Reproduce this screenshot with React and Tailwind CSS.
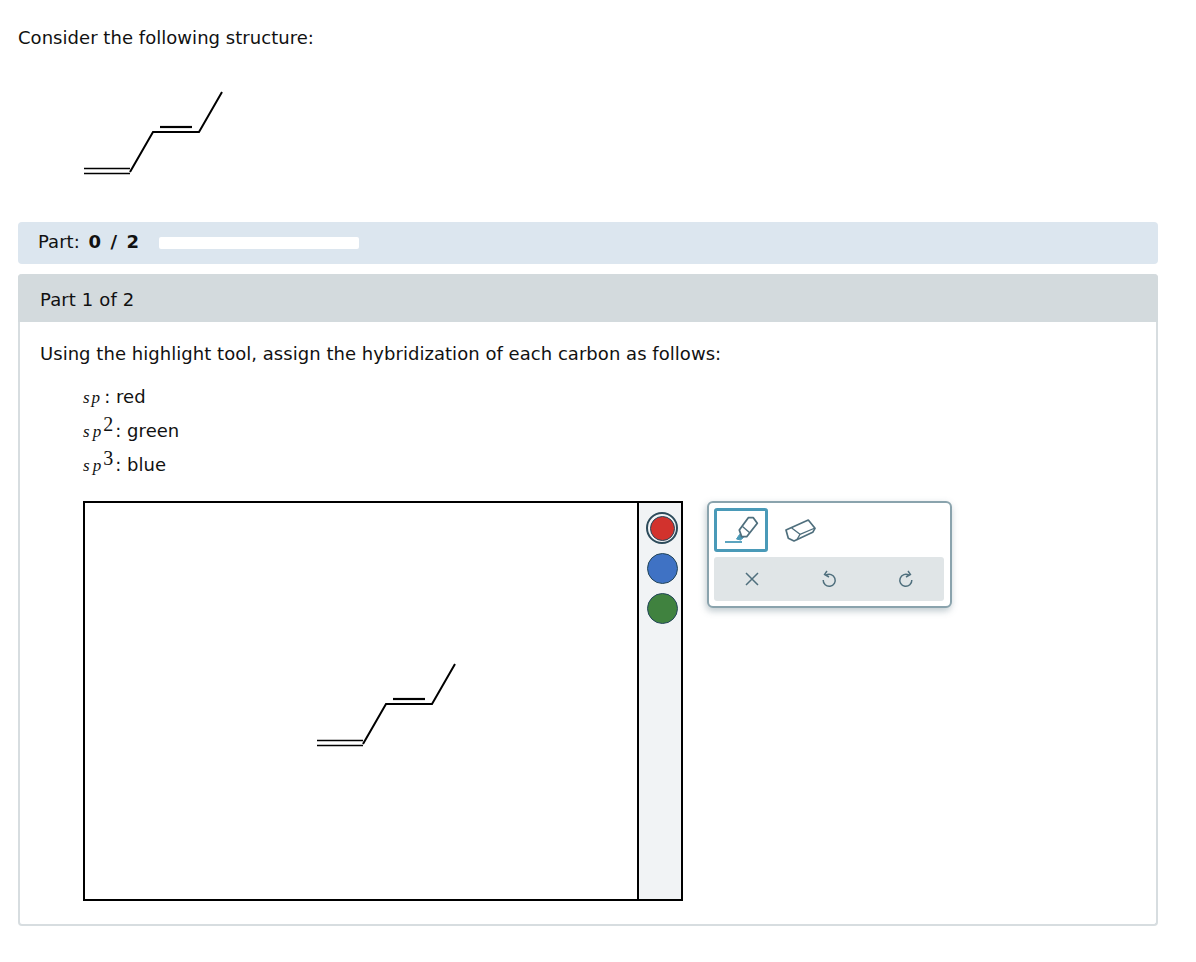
import React from 'react';

const Molecule = ({ className = '' }) => (
  <svg className={className} width="140" height="84" viewBox="0 0 140 84" fill="none" stroke="#000">
    <path d="M0 77.5H46M0 82.5H46" strokeWidth="1.7" />
    <path d="M46 81L69 41H115L138 1" strokeWidth="2" />
    <path d="M76 36H108" strokeWidth="2.2" />
  </svg>
);

const Swatch = ({ color, selected }) => (
  <div className={`w-[32px] h-[32px] rounded-full flex items-center justify-center ${selected ? 'border-2 border-[#2c4a5a]' : ''}`}>
    <div className={`rounded-full border border-[#24465a] ${selected ? 'w-[25px] h-[25px]' : 'w-[31px] h-[31px]'} ${color}`} />
  </div>
);

const Sp = ({ exp }) => (
  <span className="inline-flex items-baseline" style={{ fontFamily: '"Liberation Serif", serif' }}>
    {exp ? (
      <>
        <i className="text-[17px] mr-[3px]">s</i>
        <i className="text-[17px]">p</i>
        <span className="text-[20px] relative -top-[6px] ml-[2px] mr-[2px]">{exp}</span>
      </>
    ) : (
      <i className="text-[17px] tracking-[2px] mr-[2px]">sp</i>
    )}
  </span>
);

export default function App() {
  return (
    <div className="w-[1196px] h-[962px] bg-white text-[#111] px-[18px] pt-[26px] text-[18px] leading-[24px] tracking-[0.04px]" style={{ fontFamily: '"DejaVu Sans", sans-serif' }}>
      <p>Consider the following structure:</p>

      <div className="pl-[66px] pt-[41px] h-[172px]">
        <Molecule />
      </div>

      <div className="w-[1140px] h-[42px] bg-[#dce6ef] rounded-[4px] flex items-center px-[20px]">
        <span className="w-[121px] pb-[2px]">Part: <b className="ml-[3px] tracking-[1.6px]">0 / 2</b></span>
        <div className="w-[200px] h-[12px] bg-white rounded-[2px]" />
      </div>

      <div className="w-[1140px] h-[652px] mt-[10px] border-2 border-t-0 border-[#d7dde0] rounded-[4px]">
        <div className="h-[48px] -mx-[2px] pt-[3px] bg-[#d3dadd] rounded-t-[4px] flex items-center px-[22px] tracking-[0.12px]">Part 1 of 2</div>

        <div className="px-[20px] pt-[20px]">
          <p>Using the highlight tool, assign the hybridization of each carbon as follows:</p>

          <div className="pl-[43px] mt-[10px] flex flex-col">
            <div className="h-[34px] flex items-end"><span><Sp />: red</span></div>
            <div className="h-[34px] flex items-end"><span><Sp exp="2" />: green</span></div>
            <div className="h-[34px] flex items-end"><span><Sp exp="3" />: blue</span></div>
          </div>

          <div className="flex items-start gap-[24px] ml-[43px] mt-[23px]">
            <div className="w-[600px] h-[400px] border-2 border-black flex">
              <div className="flex-1 relative pl-[232px] pt-[160px]">
                <Molecule />
              </div>
              <div className="w-[44px] bg-[#f1f3f5] border-l-2 border-black flex flex-col items-center pt-[9px] pl-[4px] gap-[8px]">
                <Swatch color="bg-[#d2322d]" selected />
                <Swatch color="bg-[#3f72c4]" />
                <Swatch color="bg-[#40823f]" />
              </div>
            </div>

            <div className="w-[245px] h-[107px] border-2 border-[#8aa3ad] rounded-[6px] bg-white pl-[5px] pr-[6px] pt-[5px] shadow-[-1px_3px_7px_rgba(70,100,115,0.35)]">
              <div className="flex items-center h-[44px] gap-[17px]">
                <div className="w-[54px] h-[44px] border-[3px] border-[#4a9ab8] rounded-[3px] flex items-center justify-center">
                  <svg width="44" height="36" viewBox="0 0 44 36" fill="none" strokeLinejoin="round">
                    <path d="M6 30H23" stroke="#4a9ab8" strokeWidth="1.8" />
                    <path d="M17.5 27l3-4.5 4 3-3 2.5z" fill="#4a9ab8" stroke="#4a9ab8" strokeWidth="1" />
                    <path d="M20.3 18L29.3 5.7H34.3L38.3 11.3L27.7 24.7H22.7Z" stroke="#4f6f7d" strokeWidth="1.8" />
                    <path d="M23.5 14.5L31 21" stroke="#4f6f7d" strokeWidth="1.4" />
                  </svg>
                </div>
                <svg width="32" height="24" viewBox="0 0 32 24" fill="none" stroke="#4f6f7d" strokeWidth="1.7" strokeLinejoin="round">
                  <path d="M1 12L23.3 2L30 10.3L27.7 14.3L9 23L3.3 20.3Z" />
                  <path d="M6.7 10L15 16.3L30 10M15 16.3L11.7 22" strokeWidth="1.3" />
                </svg>
              </div>
              <div className="h-[44px] mt-[5px] bg-[#e0e5e7] rounded-[3px] grid grid-cols-3 items-center justify-items-center">
                <svg width="14" height="14" viewBox="0 0 14 14" fill="none" stroke="#4f6f7d" strokeWidth="1.5">
                  <path d="M1 1L13 13M13 1L1 13" />
                </svg>
                <svg width="16" height="18" viewBox="0 0 16 18" fill="none" stroke="#4f6f7d" strokeWidth="1.5">
                  <path d="M5 5.2A6 6 0 1 1 2.2 10" />
                  <path d="M6 1L3.6 4.4L8 7" />
                </svg>
                <svg width="16" height="18" viewBox="0 0 16 18" fill="none" stroke="#4f6f7d" strokeWidth="1.5">
                  <path d="M11 5.2A6 6 0 1 0 13.8 10" />
                  <path d="M10 1L12.4 4.4L8 7" />
                </svg>
              </div>
            </div>
          </div>
        </div>
      </div>
    </div>
  );
}
